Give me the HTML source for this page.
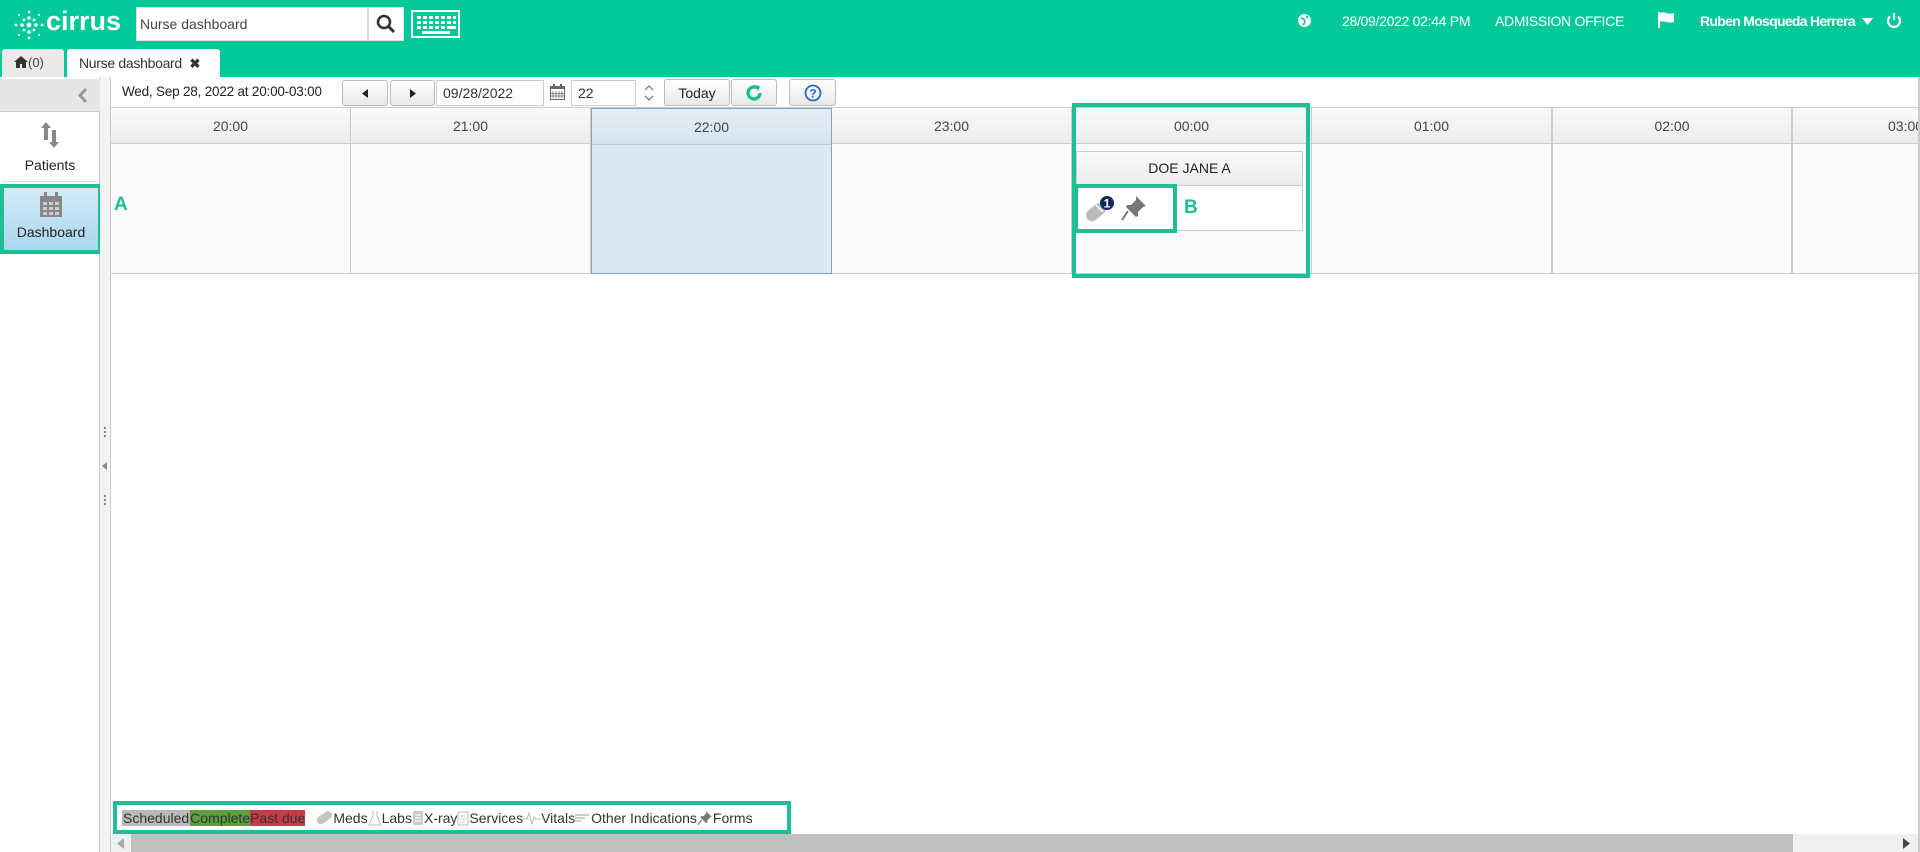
<!DOCTYPE html>
<html><head><meta charset="utf-8"><style>
*{box-sizing:border-box;margin:0;padding:0}
body{width:1920px;height:852px;overflow:hidden;background:#fff;font-family:"Liberation Sans",sans-serif;color:#333;position:relative;font-size:14px}
.abs{position:absolute}
#hdr{left:0;top:0;width:1920px;height:77px;background:#02c99a}
.btn{position:absolute;border:1px solid #bbb;border-radius:3px;background:linear-gradient(#fff,#e8e8e8);display:flex;align-items:center;justify-content:center}
.inp{position:absolute;border:1px solid #ccc;background:#fff;display:flex;align-items:center;padding-left:6px;font-size:14px}
.col{position:absolute;top:108px;height:166px;border-right:1px solid #ccc}
.colh{position:absolute;top:0;left:0;right:0;height:36px;border-bottom:1px solid #ccc;background:linear-gradient(#fafafa,#ececec);text-align:center;line-height:36px;font-size:14px;color:#444}
.gbox{position:absolute;border:4px solid #1dbf94}
.lbl{position:absolute;color:#1dbf94;font-weight:bold;font-family:"Liberation Sans",sans-serif;font-size:19px}
</style></head><body>
<div id="hdr" class="abs"></div>
<svg class="abs" style="left:13px;top:9px" width="32" height="32" viewBox="0 0 32 32" fill="#fff">
<circle cx="16" cy="16" r="2.4"/><circle cx="16" cy="9" r="1.8"/><circle cx="16" cy="23" r="1.8"/><circle cx="9" cy="16" r="1.8"/><circle cx="23" cy="16" r="1.8"/>
<circle cx="16" cy="3" r="1.4"/><circle cx="16" cy="29" r="1.4"/><circle cx="3" cy="16" r="1.4"/><circle cx="29" cy="16" r="1.4"/>
<circle cx="11" cy="11" r="1.4"/><circle cx="21" cy="11" r="1.4"/><circle cx="11" cy="21" r="1.4"/><circle cx="21" cy="21" r="1.4"/>
<circle cx="6" cy="6" r="1.1"/><circle cx="26" cy="6" r="1.1"/><circle cx="6" cy="26" r="1.1"/><circle cx="26" cy="26" r="1.1"/></svg>
<div class="abs" style="left:46px;top:6px;color:#fff;font-weight:bold;font-size:27px">cirrus</div>
<div class="abs" style="left:136px;top:7px;width:232px;height:34px;background:#fff;border:1px solid #ddd;font-size:14px;line-height:32px;padding-left:3px;color:#444">Nurse dashboard</div>
<div class="abs" style="left:368px;top:7px;width:36px;height:34px;background:#fff;border:1px solid #ddd"></div>
<svg class="abs" style="left:376px;top:14px" width="20" height="20" viewBox="0 0 20 20"><circle cx="8" cy="8" r="6" fill="none" stroke="#333" stroke-width="2.6"/><path d="M12.5 12.5L18 18" stroke="#333" stroke-width="3"/></svg>
<div class="abs" style="left:411px;top:10px;width:49px;height:28px;border:2px solid #fff;padding:3px">
<svg width="41" height="20" viewBox="0 0 41 20" fill="#fff">
<g><rect x="1" y="1" width="4" height="3"/><rect x="7" y="1" width="4" height="3"/><rect x="13" y="1" width="4" height="3"/><rect x="19" y="1" width="4" height="3"/><rect x="25" y="1" width="4" height="3"/><rect x="31" y="1" width="4" height="3"/><rect x="37" y="1" width="3" height="3"/>
<rect x="1" y="6" width="4" height="3"/><rect x="7" y="6" width="4" height="3"/><rect x="13" y="6" width="4" height="3"/><rect x="19" y="6" width="4" height="3"/><rect x="25" y="6" width="4" height="3"/><rect x="31" y="6" width="4" height="3"/><rect x="37" y="6" width="3" height="3"/>
<rect x="1" y="11" width="4" height="3"/><rect x="7" y="11" width="4" height="3"/><rect x="13" y="11" width="4" height="3"/><rect x="19" y="11" width="4" height="3"/><rect x="25" y="11" width="4" height="3"/><rect x="31" y="11" width="9" height="3"/>
<rect x="6" y="16" width="28" height="3"/></g></svg></div>
<svg class="abs" style="left:1297px;top:13px" width="16" height="16" viewBox="0 0 16 16"><circle cx="7.5" cy="7.5" r="6.5" fill="#fff"/><path d="M4 5l3 1 1 3-2 3M9 3l2 2" stroke="#02c99a" stroke-width="1.6" fill="none"/></svg>
<div class="abs" style="left:1342px;top:13px;color:#fff;font-size:14px;letter-spacing:-0.3px">28/09/2022 02:44 PM</div>
<div class="abs" style="left:1495px;top:13px;color:#fff;font-size:14px;letter-spacing:-0.3px">ADMISSION OFFICE</div>
<svg class="abs" style="left:1658px;top:12px" width="18" height="16" viewBox="0 0 18 16"><path d="M1 0v16" stroke="#fff" stroke-width="2"/><path d="M2 1c4-2 7 2 14 0v9c-7 2-10-2-14 0z" fill="#fff"/></svg>
<div class="abs" style="left:1700px;top:13px;color:#fff;font-size:14px;font-weight:bold;letter-spacing:-0.7px">Ruben Mosqueda Herrera</div>
<svg class="abs" style="left:1862px;top:18px" width="11" height="7" viewBox="0 0 11 7"><path d="M0 0h11L5.5 7z" fill="#fff"/></svg>
<svg class="abs" style="left:1886px;top:12px" width="16" height="17" viewBox="0 0 16 17"><path d="M4 4.5A6 6 0 1 0 12 4.5" stroke="#fff" stroke-width="2.2" fill="none"/><path d="M8 1v7" stroke="#fff" stroke-width="2.2"/></svg>
<div class="abs" style="left:2px;top:49px;width:62px;height:28px;background:#e9e9e9;border-radius:3px 3px 0 0;font-size:13px;line-height:28px;padding-left:12px;color:#444">
<svg width="14" height="12" viewBox="0 0 14 12" style="vertical-align:-1px"><path d="M7 0L0 6h2v6h4V8h2v4h4V6h2z" fill="#333"/></svg>(0)</div>
<div class="abs" style="left:67px;top:49px;width:153px;height:29px;background:#fff;border-radius:3px 3px 0 0;font-size:14px;line-height:28px;padding-left:12px;color:#333;letter-spacing:-0.3px">Nurse dashboard <b style="margin-left:4px;font-size:13px">✖</b></div>
<div class="abs" style="left:0;top:77px;width:100px;height:775px;background:#fff;border-right:1px solid #ccc"></div>
<div class="abs" style="left:0;top:79px;width:100px;height:33px;background:#e6e6e6;border-bottom:1px solid #ccc"></div>
<svg class="abs" style="left:78px;top:88px" width="10" height="15" viewBox="0 0 10 15"><path d="M8 1L2 7.5 8 14" stroke="#999" stroke-width="3" fill="none"/></svg>
<div class="abs" style="left:2px;top:114px;width:96px;height:68px;border-bottom:1px solid #ddd;text-align:center">
<svg width="20" height="30" viewBox="0 0 20 30" style="margin-top:6px"><path d="M6 2L1 8h3v12h4V8h3z" fill="#888"/><path d="M14 28l5-6h-3V10h-4v12H9z" fill="#888"/></svg>
<div style="font-size:14px;color:#222;margin-top:4px">Patients</div></div>
<div class="abs" style="left:0;top:184px;width:102px;height:70px;border:4px solid #1dbf94;background:linear-gradient(#d4ebf7,#a9d6f0);text-align:center">
<svg width="24" height="26" viewBox="0 0 24 26" style="margin-top:4px"><rect x="1" y="4" width="22" height="21" fill="#888"/><rect x="5" y="0" width="3" height="7" fill="#888"/><rect x="16" y="0" width="3" height="7" fill="#888"/>
<g fill="#ccc"><rect x="4" y="10" width="4" height="3"/><rect x="10" y="10" width="4" height="3"/><rect x="16" y="10" width="4" height="3"/><rect x="4" y="15" width="4" height="3"/><rect x="10" y="15" width="4" height="3"/><rect x="16" y="15" width="4" height="3"/><rect x="4" y="20" width="4" height="3"/><rect x="10" y="20" width="4" height="3"/><rect x="16" y="20" width="4" height="3"/></g></svg>
<div style="font-size:14px;color:#222;margin-top:3px">Dashboard</div></div>
<div class="abs" style="left:100px;top:77px;width:11px;height:775px;background:#f3f3f3;border-right:1px solid #ccc"></div>
<div class="abs" style="left:104px;top:427px;width:2px;height:10px;border-left:2px dotted #888"></div>
<svg class="abs" style="left:102px;top:462px" width="6" height="8" viewBox="0 0 6 8"><path d="M5 0L0 4l5 4z" fill="#888"/></svg>
<div class="abs" style="left:104px;top:495px;width:2px;height:10px;border-left:2px dotted #888"></div>
<div class="abs" style="left:122px;top:84px;font-size:13.5px;color:#222;letter-spacing:-0.2px">Wed, Sep 28, 2022 at 20:00-03:00</div>
<div class="btn" style="left:342px;top:80px;width:46px;height:26px"><svg width="6" height="9"><path d="M6 0L0 4.5 6 9z" fill="#222"/></svg></div>
<div class="btn" style="left:390px;top:80px;width:45px;height:26px"><svg width="6" height="9"><path d="M0 0l6 4.5L0 9z" fill="#222"/></svg></div>
<div class="inp" style="left:436px;top:80px;width:108px;height:26px;color:#333">09/28/2022</div>
<svg class="abs" style="left:550px;top:84px" width="15" height="16" viewBox="0 0 15 16"><rect x="0.5" y="2.5" width="14" height="13" fill="#fff" stroke="#666"/><rect x="0" y="2" width="15" height="3" fill="#666"/><rect x="3" y="0" width="2" height="4" fill="#666"/><rect x="10" y="0" width="2" height="4" fill="#666"/><path d="M3 7v7M6 7v7M9 7v7M12 7v7M1 9.5h13M1 12h13" stroke="#888"/></svg>
<div class="inp" style="left:571px;top:80px;width:65px;height:26px">22</div>
<svg class="abs" style="left:644px;top:83px" width="10" height="20" viewBox="0 0 10 20"><path d="M1 7l4-4 4 4M1 13l4 4 4-4" stroke="#666" fill="none"/></svg>
<div class="btn" style="left:664px;top:79px;width:66px;height:27px;font-size:14px;color:#222">Today</div>
<div class="btn" style="left:731px;top:79px;width:46px;height:27px"><svg width="18" height="18" viewBox="0 0 18 18"><path d="M15 9A6 6 0 1 1 11.5 3.5" stroke="#12c08f" stroke-width="3.2" fill="none"/><path d="M9 1l6 1-2 5z" fill="#12c08f"/></svg></div>
<div class="btn" style="left:789px;top:79px;width:47px;height:27px"><svg width="18" height="18" viewBox="0 0 18 18"><circle cx="9" cy="9" r="7.5" fill="none" stroke="#2a6ac0" stroke-width="1.8"/><text x="9" y="13.5" text-anchor="middle" font-family="Liberation Sans" font-weight="bold" font-size="12" fill="#2a6ac0">?</text></svg></div>
<div class="abs" style="left:111px;top:107px;width:1809px;height:167px;border-top:1px solid #ccc;border-bottom:1px solid #ccc;background:#fafafa"></div>
<div class="col" style="left:111px;width:240px"><div class="colh">20:00</div></div>
<div class="col" style="left:351px;width:240px"><div class="colh">21:00</div></div>
<div class="col" style="left:591px;width:241px;background:#dce9f3;border:1px solid #7fa5c4"><div class="colh" style="background:linear-gradient(#e4eef6,#d6e4ef);border-bottom-color:#b9cbd9">22:00</div></div>
<div class="col" style="left:832px;width:240px"><div class="colh">23:00</div></div>
<div class="col" style="left:1072px;width:240px"><div class="colh">00:00</div></div>
<div class="col" style="left:1312px;width:240px"><div class="colh">01:00</div></div>
<div class="col" style="left:1552px;width:240px;border-left:1px solid #ccc"><div class="colh">02:00</div></div>
<div class="col" style="left:1792px;width:140px;border-left:1px solid #ccc"><div class="colh" style="text-align:left;padding-left:95px">03:00</div></div>
<div class="abs" style="left:1918px;top:77px;width:2px;height:775px;background:#ccc"></div>
<div class="abs" style="left:1076px;top:151px;width:227px;height:80px;border:1px solid #ccc;background:#fff"></div>
<div class="abs" style="left:1076px;top:151px;width:227px;height:35px;border:1px solid #ccc;background:linear-gradient(#fafafa,#ececec);text-align:center;line-height:33px;font-size:14px;color:#222">DOE JANE A</div>
<svg class="abs" style="left:1083px;top:195px" width="34" height="30" viewBox="0 0 34 30"><rect x="2" y="11" width="22" height="12" rx="6" transform="rotate(-40 13 17)" fill="#bbb"/><path d="M13 10l7 7" stroke="#fff" stroke-width="1.5"/><circle cx="24" cy="8" r="7" fill="#0d2d55"/><text x="24" y="12.5" text-anchor="middle" font-family="Liberation Sans" font-weight="bold" font-size="12" fill="#fff">1</text></svg>
<svg class="abs" style="left:1120px;top:194px" width="28" height="28" viewBox="0 0 28 28"><path d="M16 2l10 10-3 1-5 5 0 4-2 1-10-10 1-2 4 0 5-5z" fill="#777"/><path d="M8 17l-6 9" stroke="#777" stroke-width="2"/></svg>
<div class="gbox" style="left:1072px;top:103px;width:238px;height:175px"></div>
<div class="gbox" style="left:1074px;top:184px;width:103px;height:49px"></div>
<div class="lbl" style="left:1184px;top:197px">B</div>
<div class="lbl" style="left:114px;top:194px">A</div>
<div class="gbox" style="left:113px;top:801px;width:678px;height:33px"></div>
<div class="abs" style="left:122px;top:809px;height:18px;display:flex;align-items:center;font-size:14px;color:#333;white-space:nowrap;letter-spacing:0">
<span style="background:#b9b9b9;padding:0 1px">Scheduled</span><span style="background:#5aa13c">Complete</span><span style="background:#c9394a;color:#333">Past due</span>
<span style="width:10px"></span>
<svg width="18" height="14" viewBox="0 0 18 14"><rect x="1" y="3" width="17" height="8" rx="4" transform="rotate(-35 9 7)" fill="#c4c4c4"/></svg>Meds
<svg width="14" height="16" viewBox="0 0 14 16"><path d="M5 1v5L1 15h12L9 6V1" stroke="#bbb" fill="none"/></svg>Labs
<svg width="12" height="16" viewBox="0 0 12 16"><rect x="1" y="1" width="10" height="14" fill="#ccc"/><path d="M3 5h6M3 8h6M3 11h6" stroke="#fff"/></svg>X-ray
<svg width="12" height="16" viewBox="0 0 12 16"><rect x="1" y="2" width="10" height="13" fill="none" stroke="#bbb"/><path d="M3 6h6M3 9h6M3 12h5" stroke="#ccc"/></svg>Services
<svg width="18" height="14" viewBox="0 0 18 14"><path d="M0 8h4l2-6 3 11 2-7 2 2h5" stroke="#bbb" fill="none"/></svg>Vitals
<svg width="14" height="12" viewBox="0 0 14 12"><path d="M0 3h14M0 6h10M0 9h6" stroke="#bbb" stroke-width="1.5"/></svg><span style="margin-left:2px">Other Indications</span>
<svg width="16" height="16" viewBox="0 0 28 28"><path d="M16 2l10 10-3 1-5 5 0 4-2 1-10-10 1-2 4 0 5-5z" fill="#777"/><path d="M8 17l-6 9" stroke="#777" stroke-width="2"/></svg>Forms</div>
<div class="abs" style="left:111px;top:834px;width:1807px;height:18px;background:#f0f0f0"></div>
<div class="abs" style="left:131px;top:834px;width:1662px;height:18px;background:#c1c1c1"></div>
<svg class="abs" style="left:117px;top:838px" width="7" height="11"><path d="M7 0L0 5.5 7 11z" fill="#aaa"/></svg>
<svg class="abs" style="left:1903px;top:838px" width="7" height="11"><path d="M0 0l7 5.5L0 11z" fill="#444"/></svg>
</body></html>
